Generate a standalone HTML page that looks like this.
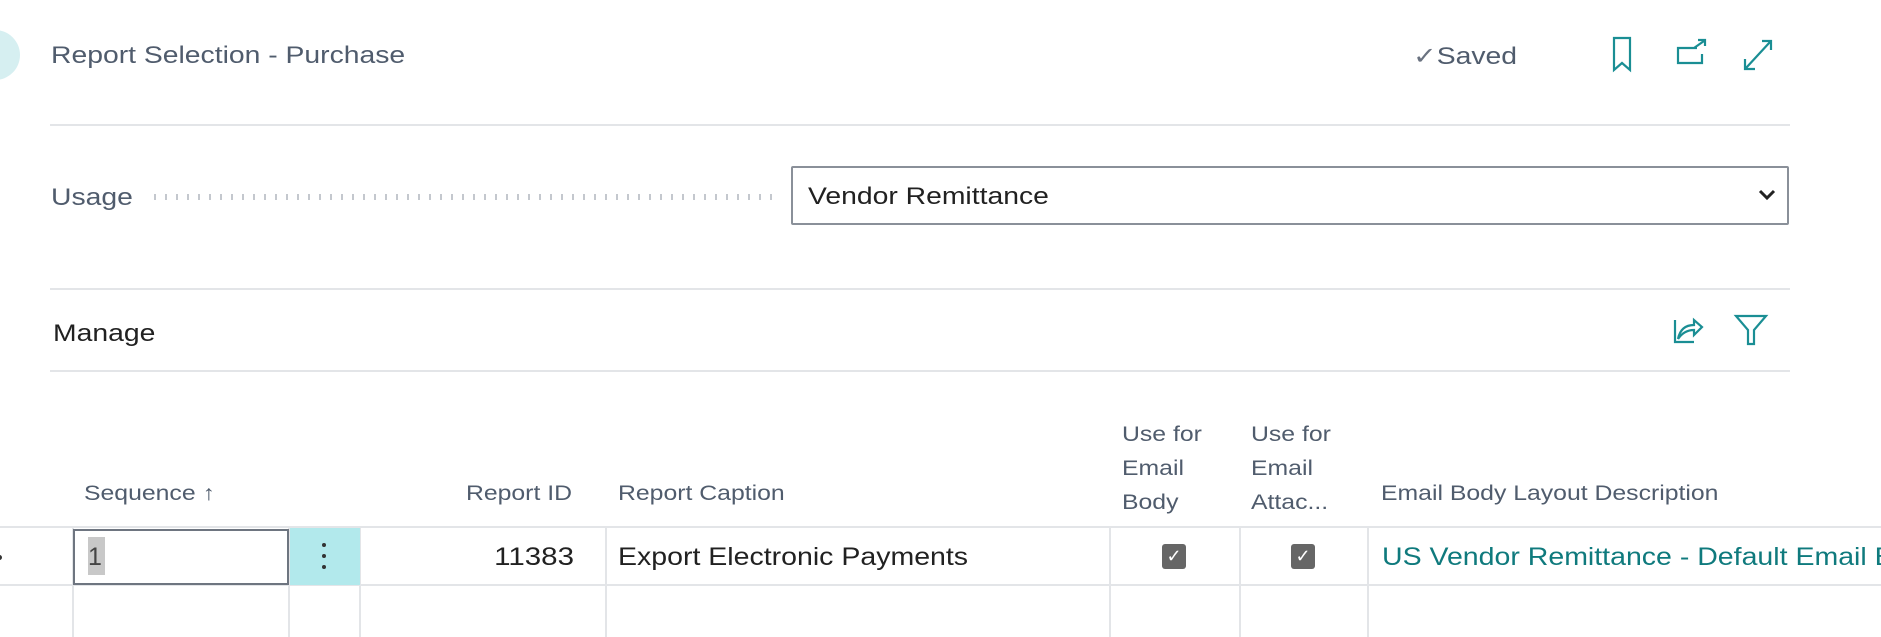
<!DOCTYPE html>
<html><head><meta charset="utf-8"><style>
*{margin:0;padding:0;box-sizing:border-box}
body{width:1881px;height:631px;overflow:hidden;background:#fff;font-family:"Liberation Sans",sans-serif;position:relative;color:#212121}
.a{position:absolute;white-space:nowrap}
.s{transform:scaleX(1.18);transform-origin:0 0}
.r{transform:scaleX(1.18);transform-origin:100% 0}
.hl{position:absolute;height:2px;background:#e3e5e8}
.vl{position:absolute;width:2px;background:#e3e5e8;top:527px;height:110px}
.hd{color:#505c6d;font-size:21px}
</style></head><body>
<div class="a" style="left:-30px;top:30px;width:50px;height:50px;border-radius:50%;background:#d6eff1"></div>
<div class="a s" style="left:51px;top:42px;font-size:24px;color:#505c6d">Report Selection - Purchase</div>
<div class="a s" style="left:1413px;top:42px;font-size:24px;color:#505c6d"><span style="font-size:24px;color:#6a7280">✓</span>Saved</div>
<svg class="a" style="left:1610px;top:36px" width="190" height="40" viewBox="0 0 190 40" fill="none" stroke="#1a8e94" stroke-width="2.2">
<path d="M4 2 H20 V34 L12 27 L4 34 Z"/>
<path d="M87 12 H68 V27 H92 V18 M84 12 L94 5 M88 4 H95 V10"/>
<path d="M136 32 L160 6 M152 5 H161 V14 M135 23 V33 H145"/>
</svg>
<div class="hl" style="left:50px;width:1740px;top:124px"></div>
<div class="a s" style="left:51px;top:184px;font-size:24px;color:#505c6d">Usage</div>
<div class="a" style="left:154px;top:194px;width:620px;height:6px;background:repeating-linear-gradient(90deg,#c4c8ce 0 2px,transparent 2px 11px)"></div>
<div class="a" style="left:791px;top:166px;width:998px;height:59px;border:2px solid #8a9099;border-radius:2px"></div>
<div class="a s" style="left:808px;top:183px;font-size:24px;color:#212121">Vendor Remittance</div>
<svg class="a" style="left:1758px;top:188px" width="18" height="14"><path d="M2 3 L9 10 L16 3" stroke="#222" stroke-width="3" fill="none"/></svg>
<div class="hl" style="left:50px;width:1740px;top:288px"></div>
<div class="a s" style="left:53px;top:320px;font-size:24px;color:#212121">Manage</div>
<svg class="a" style="left:1670px;top:312px" width="120" height="36" viewBox="0 0 120 36" fill="none" stroke="#1a8e94" stroke-width="2.2">
<path d="M5 8 V30 H24 M8 27 C10 17 16 13 24 13 V8 L32 15 L24 23 V18 C17 18 12 21 8 27"/>
<path d="M66 4 H96 L84 18 V32 H78 V18 Z"/>
</svg>
<div class="hl" style="left:50px;width:1740px;top:370px"></div>
<div class="a hd s" style="left:84px;top:482px">Sequence ↑</div>
<div class="a hd r" style="left:440px;width:132px;text-align:right;top:482px">Report ID</div>
<div class="a hd s" style="left:618px;top:482px">Report Caption</div>
<div class="a hd s" style="left:1122px;top:418px;line-height:34px">Use for<br>Email<br>Body</div>
<div class="a hd s" style="left:1251px;top:418px;line-height:34px">Use for<br>Email<br>Attac...</div>
<div class="a hd s" style="left:1381px;top:482px">Email Body Layout Description</div>
<div class="hl" style="left:0;width:1881px;top:526px"></div>
<div class="hl" style="left:0;width:1881px;top:584px"></div>
<div class="vl" style="left:72px"></div><div class="vl" style="left:288px"></div><div class="vl" style="left:359px"></div>
<div class="vl" style="left:605px"></div><div class="vl" style="left:1109px"></div><div class="vl" style="left:1239px"></div><div class="vl" style="left:1367px"></div>
<div class="a" style="left:290px;top:528px;width:70px;height:57px;background:#b2e9ec"></div>
<div class="a" style="left:322px;top:543px;width:4px;height:4px;border-radius:50%;background:#333;box-shadow:0 11px 0 #333,0 22px 0 #333"></div>
<div class="a" style="left:73px;top:529px;width:216px;height:56px;border:2px solid #6e7580;background:#fff"></div>
<div class="a" style="left:88px;top:537px;width:17px;height:38px;background:#c8c8c8"></div>
<div class="a" style="left:88px;top:543px;font-size:25px;color:#444">1</div>
<div class="a" style="left:-3px;top:555px;width:5px;height:5px;border-radius:50%;background:#333"></div>
<div class="a r" style="left:440px;width:134px;text-align:right;top:543px;font-size:25px">11383</div>
<div class="a" style="left:618px;top:543px;font-size:25px;transform:scaleX(1.14);transform-origin:0 0">Export Electronic Payments</div>
<div class="a" style="left:1162px;top:544px;width:24px;height:25px;background:#666;border-radius:3px;color:#fff;font-size:18px;text-align:center;line-height:25px">✓</div>
<div class="a" style="left:1291px;top:544px;width:24px;height:25px;background:#666;border-radius:3px;color:#fff;font-size:18px;text-align:center;line-height:25px">✓</div>
<div class="a" style="left:1382px;top:543px;font-size:25px;color:#0f7a7d;transform:scaleX(1.14);transform-origin:0 0">US Vendor Remittance - Default Email Body</div>
</body></html>
